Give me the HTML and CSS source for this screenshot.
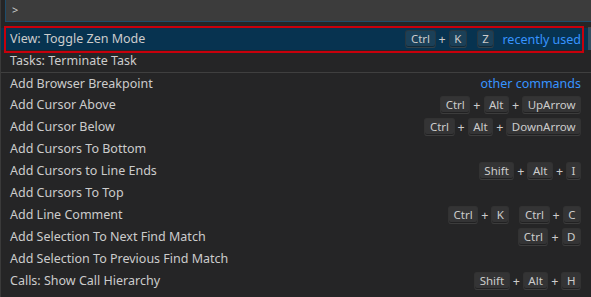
FILE: index.html
```html
<!DOCTYPE html>
<html>
<head>
<meta charset="utf-8">
<link rel="stylesheet" href="styles.css">
</head>
<body>
<div class="widget">
  <div class="header">
    <div class="input">&gt;</div>
  </div>
  <div class="list">
    <div class="row selected">
      <span class="label">View: Toggle Zen Mode</span>
      <span class="keys"><kbd>Ctrl</kbd><span class="plus">+</span><kbd>K</kbd><span class="chord"></span><kbd>Z</kbd></span>
      <span class="tag">recently used</span>
    </div>
    <div class="row">
      <span class="label">Tasks: Terminate Task</span>
    </div>
    <div class="row sep">
      <span class="label">Add Browser Breakpoint</span>
      <span class="tag">other commands</span>
    </div>
    <div class="row">
      <span class="label">Add Cursor Above</span>
      <span class="keys"><kbd>Ctrl</kbd><span class="plus">+</span><kbd>Alt</kbd><span class="plus">+</span><kbd>UpArrow</kbd></span>
    </div>
    <div class="row">
      <span class="label">Add Cursor Below</span>
      <span class="keys"><kbd>Ctrl</kbd><span class="plus">+</span><kbd>Alt</kbd><span class="plus">+</span><kbd>DownArrow</kbd></span>
    </div>
    <div class="row">
      <span class="label">Add Cursors To Bottom</span>
    </div>
    <div class="row">
      <span class="label">Add Cursors to Line Ends</span>
      <span class="keys"><kbd>Shift</kbd><span class="plus">+</span><kbd>Alt</kbd><span class="plus">+</span><kbd>I</kbd></span>
    </div>
    <div class="row">
      <span class="label">Add Cursors To Top</span>
    </div>
    <div class="row">
      <span class="label">Add Line Comment</span>
      <span class="keys"><kbd>Ctrl</kbd><span class="plus">+</span><kbd>K</kbd><span class="chord"></span><kbd>Ctrl</kbd><span class="plus">+</span><kbd>C</kbd></span>
    </div>
    <div class="row">
      <span class="label">Add Selection To Next Find Match</span>
      <span class="keys"><kbd>Ctrl</kbd><span class="plus">+</span><kbd>D</kbd></span>
    </div>
    <div class="row">
      <span class="label">Add Selection To Previous Find Match</span>
    </div>
    <div class="row">
      <span class="label">Calls: Show Call Hierarchy</span>
      <span class="keys"><kbd>Shift</kbd><span class="plus">+</span><kbd>Alt</kbd><span class="plus">+</span><kbd>H</kbd></span>
    </div>
  </div>
  <div class="slider"></div>
  <div class="highlight"></div>
</div>
</body>
</html>
```
FILE: styles.css
```css
html, body {
  margin: 0;
  padding: 0;
  background: #252526;
}
body {
  width: 591px;
  height: 297px;
  overflow: hidden;
  font-family: "Noto Sans", "Open Sans", sans-serif;
  font-size: 12.5px;
  color: #cccccc;
}
.widget {
  position: relative;
  height: 297px;
  background: #252526;
  border-left: 1px solid #3a3a3a;
  box-sizing: border-box;
}
.header {
  height: 28px;
  padding-left: 4px;
  box-sizing: border-box;
}
.input {
  height: 22px;
  background: #3c3c3c;
  border-left: 1px solid #1e4d6b;
  border-bottom: 1px solid #1e4d6b;
  box-sizing: border-box;
  padding-left: 6px;
  line-height: 20px;
  font-size: 11px;
  color: #cccccc;
}
.list {
  display: flex;
  flex-direction: column;
}
.row {
  height: 22px;
  display: flex;
  align-items: center;
  padding: 0 10px 0 9px;
  box-sizing: border-box;
  white-space: nowrap;
}
.row.selected {
  background: #073350;
}
.row.sep {
  border-top: 1px solid #3f3f3f;
}
.label {
  flex: 1;
  line-height: 22px;
}
.keys {
  display: flex;
  align-items: center;
}
kbd {
  font-family: inherit;
  font-size: 11.5px;
  line-height: 12px;
  color: #cccccc;
  background: rgba(128, 128, 128, 0.17);
  border: 1px solid rgba(51, 51, 51, 0.6);
  border-bottom-color: rgba(68, 68, 68, 0.6);
  box-shadow: inset 0 -1px 0 rgba(0, 0, 0, 0.36);
  border-radius: 3px;
  padding: 2px 4.5px;
  height: 18px;
  box-sizing: border-box;
  display: inline-flex;
  align-items: center;
}
.plus {
  padding: 0 3px;
  font-size: 12.5px;
}
.chord {
  width: 10px;
}
.tag {
  color: #3794ff;
  margin-left: 8px;
}
.slider {
  position: absolute;
  left: 587px;
  top: 27px;
  width: 4px;
  height: 23px;
  background: rgba(121, 121, 121, 0.4);
}
.highlight {
  position: absolute;
  left: 3px;
  top: 26px;
  width: 580px;
  height: 27px;
  border: 2px solid #c8000b;
  box-sizing: border-box;
}
```
